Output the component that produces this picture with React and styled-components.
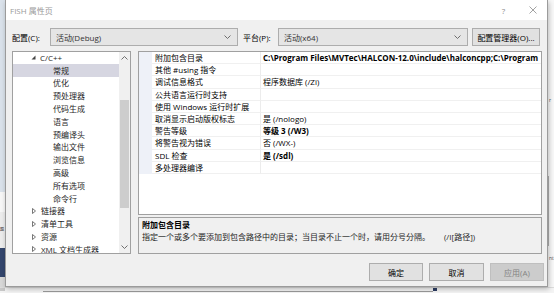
import styled, { createGlobalStyle } from "styled-components";

const GlobalStyle = createGlobalStyle`
  html, body {
    margin: 0;
    padding: 0;
    overflow: hidden;
  }
  body {
    width: 554px;
    height: 293px;
    background: #f6f6f6;
    font-family: "Open Sans", "Noto Sans CJK SC", sans-serif;
    font-size: 8px;
    color: #000;
  }
`;

// Desktop behind the dialog
const Desktop = styled.div`
  display: grid;
  grid-template-columns: 5px 543px 6px;
  grid-template-rows: 287px 6px;
  width: 554px;
  height: 293px;
`;

const LeftStrip = styled.div`
  display: flex;
  flex-direction: column;
  overflow: hidden;
`;

const StripBlock = styled.div`
  height: ${({ h }) => h}px;
  background: ${({ bg }) => bg};
  color: #333;
  font-size: 4px;
  line-height: ${({ h }) => h}px;
  white-space: nowrap;
`;

const RightStrip = styled.div`
  display: flex;
  flex-direction: column;
  background: #f8f8f8;
  color: #555;
  font-size: 5px;
`;

const RightFrag = styled.div`
  margin-top: ${({ top }) => top}px;
  height: ${({ h }) => h || 8}px;
  line-height: ${({ h }) => h || 8}px;
  padding-left: 1px;
  border-left: ${({ line }) => (line ? "1px solid #b0b0b0" : "none")};
`;

const BottomStrip = styled.div`
  grid-column: 1 / span 3;
  display: flex;
  background: #f4f4f4;
  border-top: 1px solid #dcdcdc;
`;

const BottomPiece = styled.div`
  width: ${({ w }) => w}px;
  background: ${({ bg }) => bg};
  border-bottom: ${({ line }) => (line ? "1px solid #9a9a9a" : "none")};
  height: 3px;
`;

// Dialog
const Dialog = styled.div`
  display: flex;
  flex-direction: column;
  background: #f0f0f0;
  border: 1px solid #9b9b9b;
  border-top: none;
  box-shadow: 1px 2px 5px rgba(0, 0, 0, 0.25);
  box-sizing: border-box;
  position: relative;
  z-index: 1;
`;

const TitleBar = styled.div`
  height: 20px;
  background: #fff;
  display: flex;
  align-items: center;
  padding-left: 4px;
`;

const Title = styled.div`
  color: #999;
  font-size: 8px;
  flex: 1;
`;

const TitleButton = styled.div`
  width: 29px;
  display: flex;
  justify-content: center;
  align-items: center;
  color: #8a8a8a;
  font-size: 8px;
`;

const Body = styled.div`
  flex: 1;
  display: flex;
  flex-direction: column;
  padding: 8px 5px 0 6px;
`;

const ConfigRow = styled.div`
  display: flex;
  align-items: center;
  height: 18px;
`;

const Label = styled.div`
  width: ${({ w }) => w}px;
  margin-left: ${({ ml }) => ml || 0}px;
  white-space: nowrap;
`;

const Combo = styled.div`
  width: ${({ w }) => w}px;
  height: 18px;
  box-sizing: border-box;
  border: 1px solid #adadad;
  background: #e5e5e5;
  display: flex;
  align-items: center;
  padding: 0 6px 0 5px;
  color: #333;
  span {
    flex: 1;
  }
`;

const Button = styled.div`
  width: ${({ w }) => w}px;
  height: 18px;
  margin-left: ${({ ml }) => ml || 0}px;
  box-sizing: border-box;
  border: 1px solid ${({ disabled }) => (disabled ? "#bfbfbf" : "#adadad")};
  background: ${({ disabled }) => (disabled ? "#cccccc" : "#e1e1e1")};
  color: ${({ disabled }) => (disabled ? "#838383" : "#000")};
  display: flex;
  align-items: center;
  justify-content: center;
  white-space: nowrap;
`;

const Main = styled.div`
  display: grid;
  grid-template-columns: 119px 404px;
  column-gap: 7px;
  height: 203px;
  margin-top: 5px;
`;

// Tree on the left
const Tree = styled.div`
  border: 1px solid #a0a0a0;
  background: #fff;
  display: flex;
  overflow: hidden;
`;

const TreeList = styled.div`
  width: 106px;
  margin-top: -1px;
`;

const TreeRow = styled.div`
  height: 12.8px;
  display: flex;
  align-items: center;
  padding-left: ${({ indent }) => indent}px;
  background: ${({ selected }) => (selected ? "#d6d6e1" : "transparent")};
  white-space: nowrap;
  color: #1e1e1e;
`;

const Arrow = styled.span`
  width: 9px;
  display: flex;
  align-items: center;
`;

const Scrollbar = styled.div`
  width: 11px;
  display: flex;
  flex-direction: column;
  align-items: center;
  background: #f0f0f0;
`;

const ScrollArrow = styled.div`
  height: 12px;
  display: flex;
  align-items: center;
  justify-content: center;
`;

const ScrollTrack = styled.div`
  flex: 1;
  width: 9px;
  padding-top: ${({ offset }) => offset}px;
`;

const Thumb = styled.div`
  height: ${({ h }) => h}px;
  background: #cdcdcd;
`;

// Property grid on the right
const RightCol = styled.div`
  display: grid;
  grid-template-rows: 164px 37px;
  row-gap: 2px;
`;

const PropGrid = styled.div`
  border: 1px solid #a0a0a0;
  background: #fff;
  overflow: hidden;
`;

const PropRow = styled.div`
  display: grid;
  grid-template-columns: 13px 109px 1fr;
  height: 12.2px;
`;

const Margin = styled.div`
  background: #eef1f8;
`;

const NameCell = styled.div`
  padding-left: 3px;
  border-bottom: 1px solid #f0f0f0;
  border-right: 1px solid #ececec;
  line-height: 11.2px;
  white-space: nowrap;
  overflow: hidden;
`;

const ValueCell = styled.div`
  padding-left: 2px;
  border-bottom: 1px solid #f0f0f0;
  line-height: 11.2px;
  white-space: nowrap;
  overflow: hidden;
  font-weight: ${({ bold }) => (bold ? 700 : 400)};
`;

const Desc = styled.div`
  border: 1px solid #a0a0a0;
  background: #f0f0f0;
  padding: 1px 3px;
  line-height: 12px;
`;

const DescTitle = styled.div`
  font-weight: 700;
`;

const DescText = styled.div`
  display: flex;
  color: #1e1e1e;
  span:first-child {
    width: 302px;
  }
`;

const Footer = styled.div`
  display: flex;
  justify-content: flex-end;
  gap: 6px;
  margin-top: 9px;
  margin-right: -2px;
`;

const Chevron = ({ up }) => (
  <svg width="7" height="4" viewBox="0 0 7 4">
    <polyline
      points={up ? "0.5,3.5 3.5,0.5 6.5,3.5" : "0.5,0.5 3.5,3.5 6.5,0.5"}
      fill="none"
      stroke="#606060"
      strokeWidth="0.9"
    />
  </svg>
);

const Expanded = () => (
  <svg width="5" height="5" viewBox="0 0 5 5">
    <polygon points="4.5,0.5 4.5,4.5 0.5,4.5" fill="#444" />
  </svg>
);

const Collapsed = () => (
  <svg width="4" height="6" viewBox="0 0 4 6">
    <polygon points="0.5,0.5 3.5,3 0.5,5.5" fill="none" stroke="#555" strokeWidth="0.8" />
  </svg>
);

const CloseIcon = () => (
  <svg width="8" height="8" viewBox="0 0 8 8">
    <path d="M0.5 0.5 L7.5 7.5 M7.5 0.5 L0.5 7.5" stroke="#8a8a8a" strokeWidth="0.8" />
  </svg>
);

const treeItems = [
  { text: "C/C++", kind: "open" },
  { text: "常规", selected: true },
  { text: "优化" },
  { text: "预处理器" },
  { text: "代码生成" },
  { text: "语言" },
  { text: "预编译头" },
  { text: "输出文件" },
  { text: "浏览信息" },
  { text: "高级" },
  { text: "所有选项" },
  { text: "命令行" },
  { text: "链接器", kind: "closed" },
  { text: "清单工具", kind: "closed" },
  { text: "资源", kind: "closed" },
  { text: "XML 文档生成器", kind: "closed" },
];

const props = [
  ["附加包含目录", "C:\\Program Files\\MVTec\\HALCON-12.0\\include\\halconcpp;C:\\Program", true],
  ["其他 #using 指令", ""],
  ["调试信息格式", "程序数据库 (/Zi)"],
  ["公共语言运行时支持", ""],
  ["使用 Windows 运行时扩展", ""],
  ["取消显示启动版权标志", "是 (/nologo)"],
  ["警告等级", "等级 3 (/W3)", true],
  ["将警告视为错误", "否 (/WX-)"],
  ["SDL 检查", "是 (/sdl)", true],
  ["多处理器编译", ""],
];

const App = () => {
  return (
    <>
      <GlobalStyle />
      <Desktop>
        <LeftStrip>
          <StripBlock h={192} bg="#dae2eb" />
          <StripBlock h={20} bg="#f7f7f7" />
          <StripBlock h={36} bg="#ececec">题</StripBlock>
          <StripBlock h={29} bg="#34466d" />
          <StripBlock h={10} bg="#d8d8d8" />
        </LeftStrip>

        <Dialog>
          <TitleBar>
            <Title>FISH 属性页</Title>
            <TitleButton>?</TitleButton>
            <TitleButton>
              <CloseIcon />
            </TitleButton>
          </TitleBar>

          <Body>
            <ConfigRow>
              <Label w={38}>配置(C):</Label>
              <Combo w={188}>
                <span>活动(Debug)</span>
                <Chevron />
              </Combo>
              <Label w={35} ml={5}>平台(P):</Label>
              <Combo w={190}>
                <span>活动(x64)</span>
                <Chevron />
              </Combo>
              <Button w={68} ml={4}>配置管理器(O)...</Button>
            </ConfigRow>

            <Main>
              <Tree>
                <TreeList>
                  {treeItems.map((item) => (
                    <TreeRow
                      key={item.text}
                      selected={item.selected}
                      indent={item.kind === "open" ? 18 : item.kind === "closed" ? 19 : 40}
                    >
                      {item.kind && (
                        <Arrow>{item.kind === "open" ? <Expanded /> : <Collapsed />}</Arrow>
                      )}
                      {item.text}
                    </TreeRow>
                  ))}
                </TreeList>
                <Scrollbar>
                  <ScrollArrow>
                    <Chevron up />
                  </ScrollArrow>
                  <ScrollTrack offset={36}>
                    <Thumb h={108} />
                  </ScrollTrack>
                  <ScrollArrow>
                    <Chevron />
                  </ScrollArrow>
                </Scrollbar>
              </Tree>

              <RightCol>
                <PropGrid>
                  {props.map(([name, value, bold]) => (
                    <PropRow key={name}>
                      <Margin />
                      <NameCell>{name}</NameCell>
                      <ValueCell bold={bold}>{value}</ValueCell>
                    </PropRow>
                  ))}
                </PropGrid>
                <Desc>
                  <DescTitle>附加包含目录</DescTitle>
                  <DescText>
                    <span>指定一个或多个要添加到包含路径中的目录；当目录不止一个时，请用分号分隔。</span>
                    <span>(/I[路径])</span>
                  </DescText>
                </Desc>
              </RightCol>
            </Main>

            <Footer>
              <Button w={54}>确定</Button>
              <Button w={55}>取消</Button>
              <Button w={54} disabled>应用(A)</Button>
            </Footer>
          </Body>
        </Dialog>

        <RightStrip>
          <RightFrag top={96}>r</RightFrag>
          <RightFrag top={72} h={70} line />
          <RightFrag top={8}>nt</RightFrag>
        </RightStrip>

        <BottomStrip>
          <BottomPiece w={5} bg="#c8c8c8" />
          <BottomPiece w={38} bg="#f4f4f4" />
          <BottomPiece w={390} bg="#f4f4f4" line />
          <BottomPiece w={4} bg="#2d3d63" />
          <BottomPiece w={117} bg="#f4f4f4" />
        </BottomStrip>
      </Desktop>
    </>
  );
};

export default App;
